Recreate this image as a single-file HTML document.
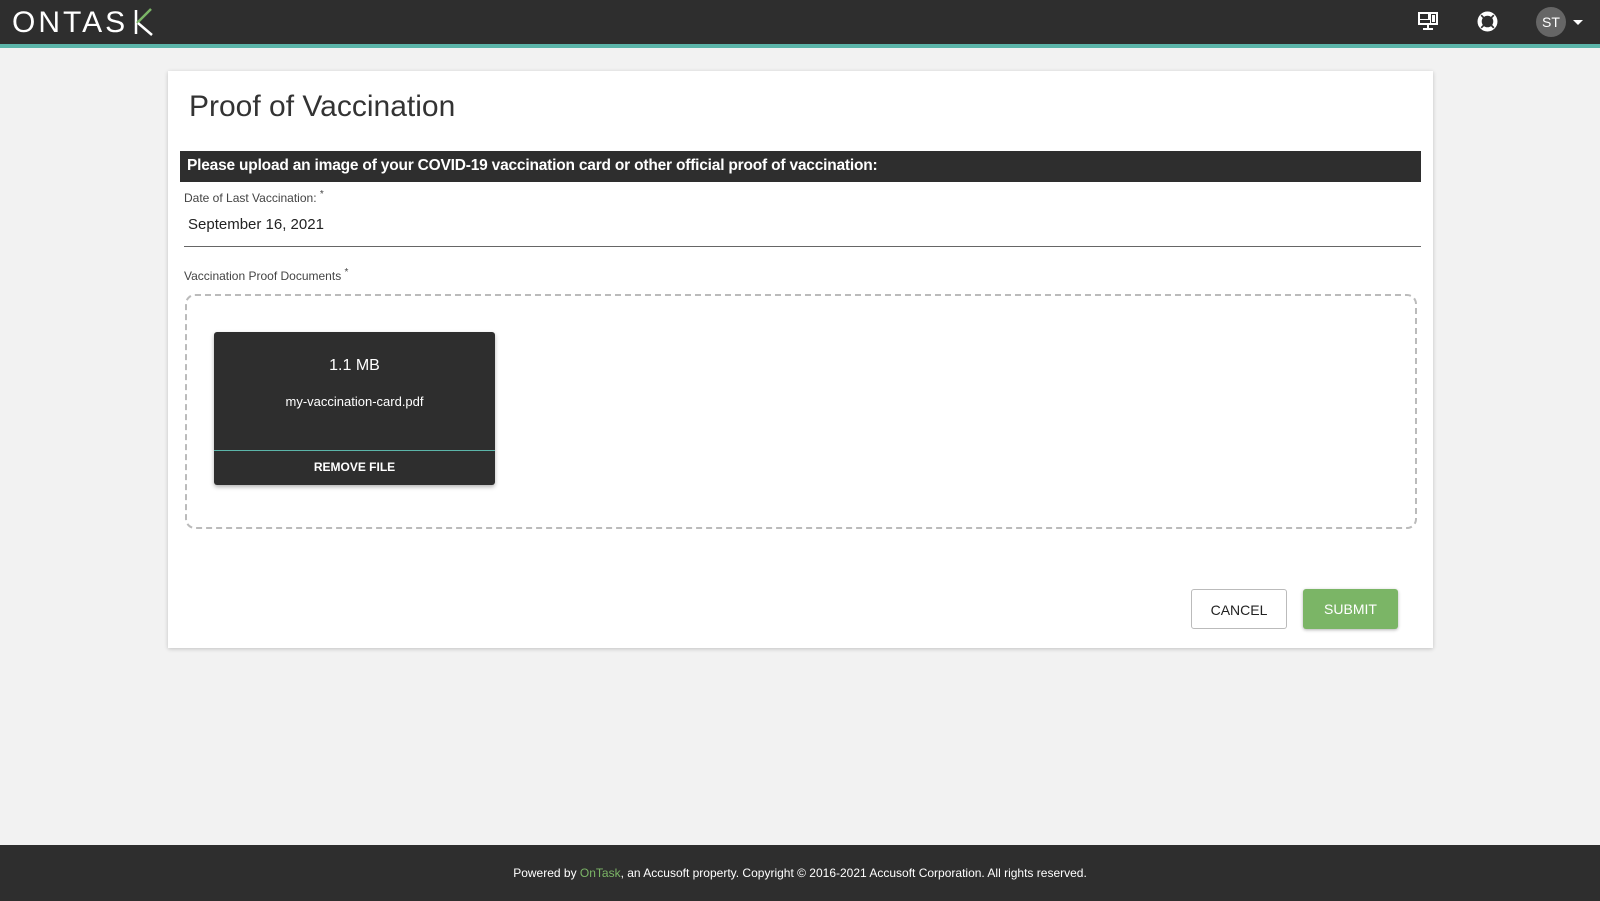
<!DOCTYPE html>
<html><head><meta charset="utf-8"><style>
*{box-sizing:border-box;margin:0;padding:0}
body{width:1600px;height:901px;background:#f2f2f2;font-family:"Liberation Sans",sans-serif;position:relative;overflow:hidden;color:#333}
.hdr{position:absolute;left:0;top:0;width:1600px;background:#2e2e2e;border-bottom:4px solid #5bb5a9;height:48px}
.logo{position:absolute;left:12px;top:6px;font-size:30px;color:#fff;letter-spacing:3px;font-weight:300}
.card{position:absolute;left:168px;top:71px;width:1265px;height:577px;background:#fff;box-shadow:0 1px 4px rgba(0,0,0,.2)}
.abs{position:absolute}
.bar{left:12px;top:80px;width:1241px;height:31px;background:#2e2e2e;color:#fff;font-size:15.5px;padding:6px 7px;font-weight:bold;letter-spacing:-0.2px}
.lbl{font-size:12px;color:#444}
.btn{position:absolute;height:40px;border-radius:3px;font-size:14px;text-align:center;line-height:40px}
.foot{position:absolute;left:0;top:845px;width:1600px;height:56px;background:#2e2e2e;color:#fff;font-size:12px;text-align:center;line-height:56px}
</style></head><body>
<div class="hdr">
<div class="logo">ONTAS</div>
<svg class="abs" style="left:134px;top:6px" width="22" height="30" viewBox="0 0 22 30"><line x1="2" y1="4" x2="2" y2="28" stroke="#fff" stroke-width="2.5"/><line x1="3" y1="17" x2="17" y2="3" stroke="#7bb566" stroke-width="2.5"/><line x1="4" y1="17" x2="18" y2="29" stroke="#fff" stroke-width="2.5"/></svg>
<svg class="abs" style="left:1417px;top:11px" width="22" height="20" viewBox="0 0 22 20"><rect x="1" y="1" width="20" height="13" fill="#fff"/><rect x="3" y="3" width="8" height="5" fill="#2e2e2e"/><rect x="3" y="9" width="10" height="3" fill="#2e2e2e"/><rect x="14" y="3" width="5" height="9" fill="#2e2e2e"/><rect x="15" y="4" width="3" height="7" fill="#fff"/><rect x="10" y="14" width="2" height="3" fill="#fff"/><rect x="6" y="17" width="10" height="2" fill="#fff"/></svg>
<svg class="abs" style="left:1477px;top:11px" width="21" height="21" viewBox="0 0 20 20"><circle cx="10" cy="10" r="7.5" fill="none" stroke="#fff" stroke-width="4"/><g stroke="#2e2e2e" stroke-width="1.6"><line x1="4" y1="4" x2="7" y2="7"/><line x1="16" y1="4" x2="13" y2="7"/><line x1="4" y1="16" x2="7" y2="13"/><line x1="16" y1="16" x2="13" y2="13"/></g></svg>
<div class="abs" style="left:1536px;top:7px;width:30px;height:30px;border-radius:50%;background:#666;color:#fff;font-size:14px;text-align:center;line-height:30px">ST</div>
<div class="abs" style="left:1573px;top:20px;border-left:5px solid transparent;border-right:5px solid transparent;border-top:5px solid #fff"></div>
</div>
<div class="card">
<div class="abs" style="left:21px;top:19px;font-size:30px;color:#333">Proof of Vaccination</div>
<div class="abs bar">Please upload an image of your COVID-19 vaccination card or other official proof of vaccination:</div>
<div class="abs lbl" style="left:16px;top:118px">Date of Last Vaccination: <sup>*</sup></div>
<div class="abs" style="left:20px;top:145px;font-size:15px;color:#222">September 16, 2021</div>
<div class="abs" style="left:16px;top:175px;width:1237px;height:1px;background:#666"></div>
<div class="abs lbl" style="left:16px;top:196px">Vaccination Proof Documents <sup>*</sup></div>
<div class="abs" style="left:17px;top:223px;width:1232px;height:235px;border:2px dashed #bbb;border-radius:10px"></div>
<div class="abs" style="left:46px;top:261px;width:281px;height:153px;background:#2e2e2e;border-radius:3px;box-shadow:0 2px 4px rgba(0,0,0,.3);color:#fff;text-align:center">
<div style="position:absolute;top:25px;width:100%;font-size:16px">1.1 MB</div>
<div style="position:absolute;top:62px;width:100%;font-size:13px">my-vaccination-card.pdf</div>
<div style="position:absolute;top:118px;width:100%;height:1px;background:#5bb5a9"></div>
<div style="position:absolute;top:128px;width:100%;font-size:12px;font-weight:bold">REMOVE FILE</div>
</div>
<div class="btn" style="left:1023px;top:518px;width:96px;border:1px solid #bbb;color:#222">CANCEL</div>
<div class="btn" style="left:1135px;top:518px;width:95px;background:#7bb566;color:#fff;box-shadow:0 1px 3px rgba(0,0,0,.3)">SUBMIT</div>
</div>
<div class="foot">Powered by <span style="color:#7bb566">OnTask</span>, an Accusoft property. Copyright © 2016-2021 Accusoft Corporation. All rights reserved.</div>
</body></html>
